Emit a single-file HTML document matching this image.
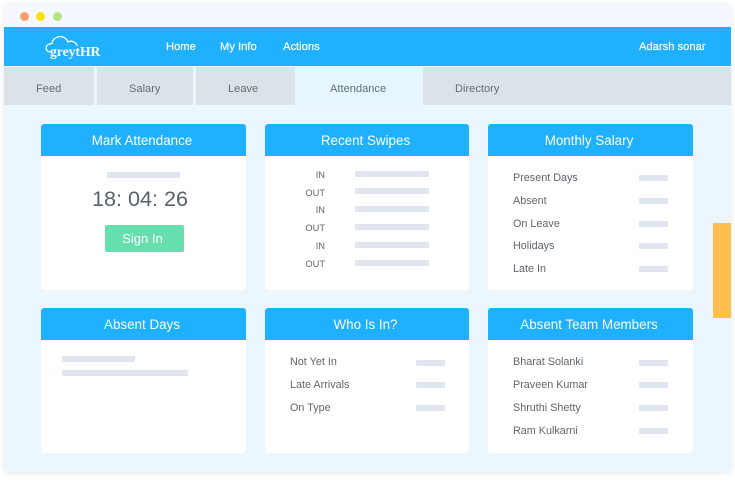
<!DOCTYPE html>
<html>
<head>
<meta charset="utf-8">
<style>
html,body{margin:0;padding:0;background:#fff;}
body{width:735px;height:484px;position:relative;overflow:hidden;font-family:"Liberation Sans",sans-serif;color:#5f666c;}
#all{left:0;top:0;width:735px;height:484px;filter:blur(.3px);}
div,span.t{position:absolute;}
.t{white-space:nowrap;line-height:16px;}
#win{left:4px;top:4px;width:727px;height:468px;background:#ebf6ff;border-radius:5px;box-shadow:0 1px 6px rgba(170,190,210,.35);}
#top{left:4px;top:4px;width:727px;height:23px;background:#f5f8ff;border-radius:5px 5px 0 0;}
.dot{width:9px;height:9px;border-radius:50%;top:12px;}
#nav{left:4px;top:27px;width:727px;height:39px;background:#1fb1ff;}
.n{color:#fff;font-size:11.2px;top:39px;-webkit-text-stroke:.2px #fff;}
.tab{top:67px;height:38px;background:#dbe2e8;}
.l{font-size:11.1px;top:80px;color:#666d73;text-align:center;}
.card{width:205px;background:#fff;border-radius:3px;}
.hd{left:0;top:0;width:calc(100% - 3px);padding-right:3px;height:32px;background:#1fb1ff;border-radius:3px 3px 0 0;color:#fff;font-size:13.4px;line-height:33px;text-align:center;}
.b{background:#e0e5f0;height:6px;border-radius:1px;}
.r{font-size:10.8px;color:#5f666c;}
.s{font-size:9.3px;color:#5f666c;text-align:right;width:40px;}
</style>
</head>
<body>
<div id="all">
<div id="win"></div>
<div id="top"></div>
<div class="dot" style="left:20px;background:#ff9f6e"></div>
<div class="dot" style="left:36px;background:#ffe10a"></div>
<div class="dot" style="left:53px;background:#b5e67f"></div>
<div id="nav"></div>

<svg style="position:absolute;left:44px;top:35px" width="60" height="26" viewBox="0 0 60 26" fill="none" stroke="#fff" stroke-width="1.3" stroke-linecap="round">
<path d="M6 17C1 17 0 9 8 8.500C8.500 5 11 2 16 1.500C20 1.500 23 4 24 7C27 5 32 7 33 10.500"/>
</svg>
<span class="t" style="left:50px;top:44px;color:#fff;font-size:13.6px;font-family:'Liberation Serif',serif;font-weight:bold">greytHR</span>

<span class="t n" style="left:166px">Home</span>
<span class="t n" style="left:220px">My Info</span>
<span class="t n" style="left:283px">Actions</span>
<span class="t n" style="left:639px">Adarsh sonar</span>

<div class="tab" style="left:4px;width:90px"></div>
<div class="tab" style="left:97px;width:96px"></div>
<div class="tab" style="left:196px;width:99px"></div>
<div class="tab" style="left:295px;width:128px;background:#e5f6ff"></div>
<div class="tab" style="left:423px;width:308px"></div>
<span class="t l" style="left:36px;top:81px">Feed</span>
<span class="t l" style="left:129px;top:81px">Salary</span>
<span class="t l" style="left:228px;top:81px">Leave</span>
<span class="t l" style="left:330px;top:81px">Attendance</span>
<span class="t l" style="left:455px;top:81px">Directory</span>

<!-- Row 1 -->
<div class="card" style="left:41px;top:124px;height:166px"><div class="hd">Mark Attendance</div></div>
<div class="card" style="left:265px;top:124px;height:166px;width:204px"><div class="hd">Recent Swipes</div></div>
<div class="card" style="left:488px;top:124px;height:166px"><div class="hd">Monthly Salary</div></div>

<div class="b" style="left:107px;top:172px;width:73px"></div>
<span class="t" style="left:92px;top:186px;font-size:21.6px;line-height:26px;color:#5a6269">18: 04: 26</span>
<div style="left:105px;top:225px;width:79px;height:27px;background:#66deae;border-radius:2px"></div>
<span class="t" style="left:103px;width:79px;top:231px;text-align:center;color:#fff;font-size:13px">Sign In</span>

<span class="t s" style="left:285px;top:167px">IN</span>
<span class="t s" style="left:285px;top:185px">OUT</span>
<span class="t s" style="left:285px;top:202px">IN</span>
<span class="t s" style="left:285px;top:220px">OUT</span>
<span class="t s" style="left:285px;top:238px">IN</span>
<span class="t s" style="left:285px;top:256px">OUT</span>
<div class="b" style="left:355px;top:170.500px;width:74px"></div>
<div class="b" style="left:355px;top:188px;width:74px"></div>
<div class="b" style="left:355px;top:206px;width:74px"></div>
<div class="b" style="left:355px;top:224px;width:74px"></div>
<div class="b" style="left:355px;top:242px;width:74px"></div>
<div class="b" style="left:355px;top:260px;width:74px"></div>

<span class="t r" style="left:513px;top:170px">Present Days</span>
<span class="t r" style="left:513px;top:193px">Absent</span>
<span class="t r" style="left:513px;top:216px">On Leave</span>
<span class="t r" style="left:513px;top:238px">Holidays</span>
<span class="t r" style="left:513px;top:261px">Late In</span>
<div class="b" style="left:639px;top:175px;width:29px"></div>
<div class="b" style="left:639px;top:198px;width:29px"></div>
<div class="b" style="left:639px;top:221px;width:29px"></div>
<div class="b" style="left:639px;top:243px;width:29px"></div>
<div class="b" style="left:639px;top:266px;width:29px"></div>

<!-- Row 2 -->
<div class="card" style="left:41px;top:308px;height:145px"><div class="hd">Absent Days</div></div>
<div class="card" style="left:265px;top:308px;height:145px;width:204px"><div class="hd">Who Is In?</div></div>
<div class="card" style="left:488px;top:308px;height:145px"><div class="hd">Absent Team Members</div></div>

<div class="b" style="left:62px;top:356px;width:73px"></div>
<div class="b" style="left:62px;top:370px;width:126px"></div>

<span class="t r" style="left:290px;top:354px">Not Yet In</span>
<span class="t r" style="left:290px;top:377px">Late Arrivals</span>
<span class="t r" style="left:290px;top:400px">On Type</span>
<div class="b" style="left:416px;top:360px;width:29px"></div>
<div class="b" style="left:416px;top:382px;width:29px"></div>
<div class="b" style="left:416px;top:405px;width:29px"></div>

<span class="t r" style="left:513px;top:354px">Bharat Solanki</span>
<span class="t r" style="left:513px;top:377px">Praveen Kumar</span>
<span class="t r" style="left:513px;top:400px">Shruthi Shetty</span>
<span class="t r" style="left:513px;top:423px">Ram Kulkarni</span>
<div class="b" style="left:639px;top:360px;width:29px"></div>
<div class="b" style="left:639px;top:382px;width:29px"></div>
<div class="b" style="left:639px;top:405px;width:29px"></div>
<div class="b" style="left:639px;top:428px;width:29px"></div>

<div style="left:713px;top:223px;width:18px;height:95px;background:#ffbf4d"></div>
</div>
</body>
</html>
